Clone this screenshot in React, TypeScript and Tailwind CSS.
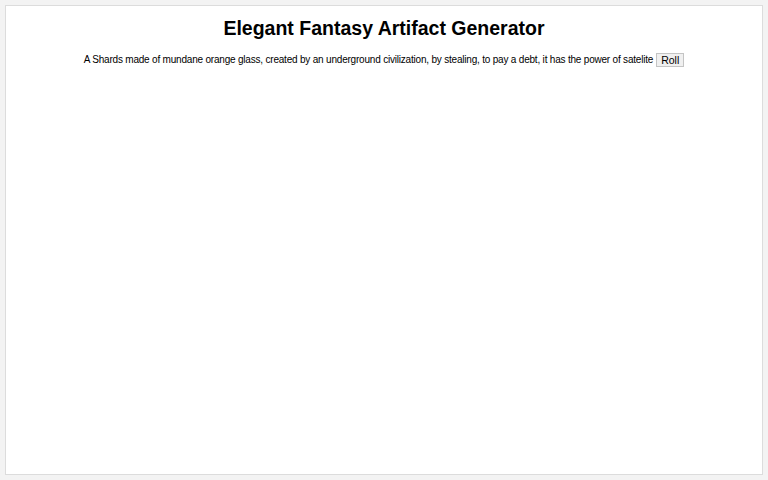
import React, { useState } from 'react';

const materials = ['mundane orange glass', 'tarnished silver', 'ancient bone', 'pale moonstone'];
const forms = ['Shards', 'Crown', 'Amulet', 'Chalice'];

export default function App() {
  const [artifact, setArtifact] = useState(
    'A Shards made of mundane orange glass, created by an underground civilization, by stealing, to pay a debt, it has the power of satelite'
  );

  const roll = () => {
    const form = forms[Math.floor(Math.random() * forms.length)];
    const material = materials[Math.floor(Math.random() * materials.length)];
    setArtifact(`A ${form} made of ${material}, created by an underground civilization, by stealing, to pay a debt, it has the power of satelite`);
  };

  return (
    <div className="h-[480px] w-[768px] bg-[#f3f3f3] p-[5px] font-['Liberation_Sans',Arial,sans-serif] text-black">
      <div className="h-full border border-[#dcdcdc] bg-white">
        {/* Header */}
        <h1 className="mt-[10px] text-center text-[19.5px] leading-[24px] font-bold">Elegant Fantasy Artifact Generator</h1>

        {/* Result line */}
        <div className="mt-[12px] flex items-center justify-center gap-[3px] text-[10px] tracking-[-0.2px]">
          <span>{artifact}</span>
          <button
            onClick={roll}
            className="h-[14px] border border-[#c4c4c4] bg-[#f0f0f0] px-[4px] py-0 text-[10.5px] leading-[12px] tracking-normal"
          >
            Roll
          </button>
        </div>
      </div>
    </div>
  );
}
